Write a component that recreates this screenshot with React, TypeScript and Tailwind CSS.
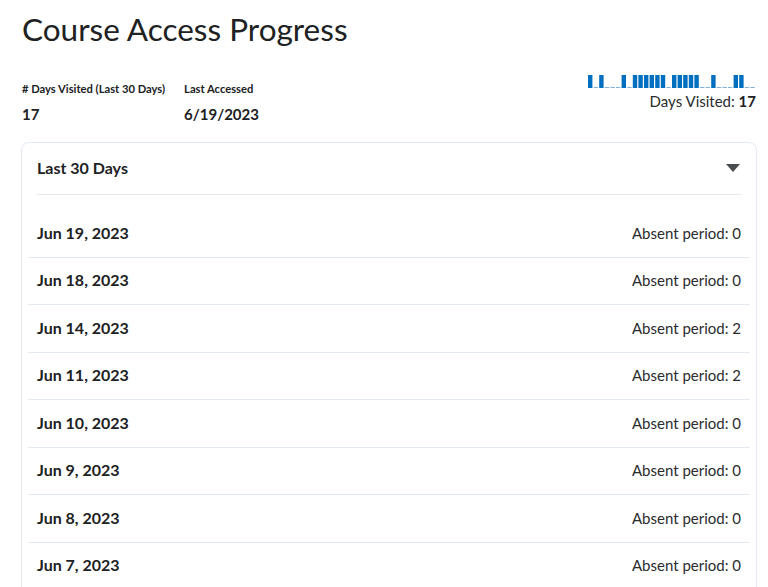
const visits = [
  1, 0, 1, 0, 0, 0, 1, 0, 1, 1, 1, 1, 1, 1, 0, 1, 1, 1, 1, 1, 0, 0, 1, 0, 0, 0, 1, 1, 0, 0,
];

const rows = [
  { date: 'Jun 19, 2023', absent: 0 },
  { date: 'Jun 18, 2023', absent: 0 },
  { date: 'Jun 14, 2023', absent: 2 },
  { date: 'Jun 11, 2023', absent: 2 },
  { date: 'Jun 10, 2023', absent: 0 },
  { date: 'Jun 9, 2023', absent: 0 },
  { date: 'Jun 8, 2023', absent: 0 },
  { date: 'Jun 7, 2023', absent: 0 },
];

const Sparkline = () => (
  <svg width="168" height="14" viewBox="0 0 168 14" className="block">
    {visits.map((v, i) =>
      v ? (
        <rect key={i} x={i * 5.6} y={0} width={4.4} height={13} fill="#006fbf" />
      ) : (
        <rect key={i} x={i * 5.6} y={12} width={4.4} height={1} fill="#7fb3dc" />
      )
    )}
  </svg>
);

export default function App() {
  return (
    <div
      className="h-screen overflow-hidden bg-white pl-[22px] pr-[11px] pt-[10px] text-[#202122]"
      style={{ fontFamily: 'Lato, "Noto Sans", sans-serif' }}
    >
      <h1 className="text-[31.5px] leading-[38px] font-normal">Course Access Progress</h1>

      <div className="mt-[24px] flex items-start justify-between pr-[1px]">
        <div className="flex gap-[19px] pt-[10px]">
          <div>
            <div className="text-[11.2px] font-bold leading-[14px]">
              # Days Visited (Last 30 Days)
            </div>
            <div className="mt-[9px] text-[15px] font-bold leading-[18px]">17</div>
          </div>
          <div>
            <div className="text-[11.2px] font-bold leading-[14px]">Last Accessed</div>
            <div className="mt-[9px] text-[15px] font-bold leading-[18px]">6/19/2023</div>
          </div>
        </div>
        <div className="flex flex-col items-end pt-[3px]">
          <Sparkline />
          <div className="mt-[3px] text-[15px] leading-[18px] text-[#2a2c2e]">
            Days Visited: <span className="font-bold text-[#202122]">17</span>
          </div>
        </div>
      </div>

      <div className="mt-[19px] -ml-[1px] min-h-[460px] rounded-lg border border-[#e3e9f1]">
        <div className="mx-[15px] flex h-[52px] items-center justify-between border-b border-[#e3e9f1] pb-[2px]">
          <span className="text-[16px] font-bold">Last 30 Days</span>
          <svg width="14" height="8" viewBox="0 0 14 8" className="mr-[1px]">
            <path d="M0 0 H14 L7 8 Z" fill="#494c4e" />
          </svg>
        </div>
        <div className="px-[6px] pt-[15px]">
          {rows.map((r) => (
            <div
              key={r.date}
              className="flex h-[47.5px] items-center justify-between border-b border-[#e3e9f1] px-[9px] pb-[1px]"
            >
              <span className="text-[16px] font-bold">{r.date}</span>
              <span className="text-[15px] text-[#2a2c2e]">Absent period: {r.absent}</span>
            </div>
          ))}
        </div>
      </div>
    </div>
  );
}
